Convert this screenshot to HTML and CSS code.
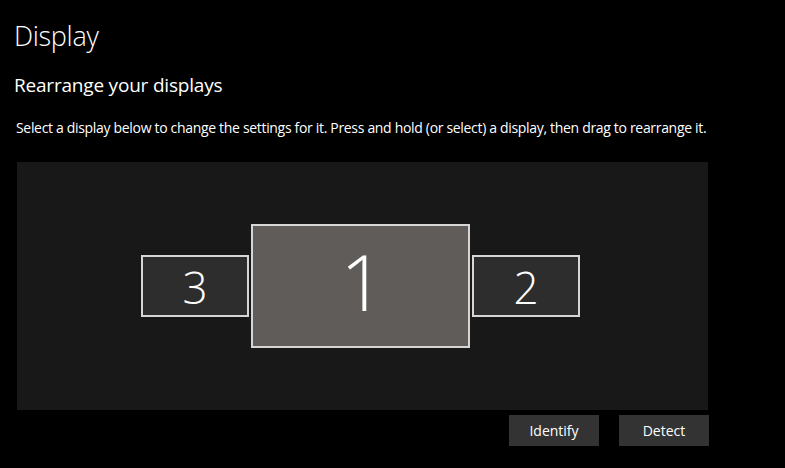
FILE: index.html
```html
<!DOCTYPE html>
<html>
<head>
<meta charset="utf-8">
<link rel="stylesheet" href="styles.css">
</head>
<body>
<div class="page">
  <h1 class="title">Display</h1>
  <h2 class="subtitle">Rearrange your displays</h2>
  <p class="hint">Select a display below to change the settings for it. Press and hold (or select) a display, then drag to rearrange it.</p>
  <div class="canvas">
    <div class="monitor small"><span>3</span></div>
    <div class="monitor main"><span>1</span></div>
    <div class="monitor small"><span>2</span></div>
  </div>
  <div class="actions">
    <button class="btn identify">Identify</button>
    <button class="btn detect">Detect</button>
  </div>
</div>
</body>
</html>
```
FILE: styles.css
```css
html, body {
  margin: 0;
  padding: 0;
  background: #000;
  width: 785px;
  height: 468px;
  overflow: hidden;
}
.page {
  font-family: "Open Sans", "Noto Sans", sans-serif;
  color: #fff;
  padding-top: 17.5px;
}
.title {
  margin: 0 0 0 14px;
  font-size: 27px;
  font-weight: 300;
  line-height: 36px;
  letter-spacing: -0.3px;
}
.subtitle {
  margin: 18px 0 0 14px;
  font-size: 19px;
  font-weight: 400;
  line-height: 26px;
  letter-spacing: -0.2px;
}
.hint {
  margin: 20px 0 0 16px;
  font-size: 14px;
  line-height: 20px;
  letter-spacing: -0.32px;
}
.canvas {
  margin: 24px 0 0 17px;
  width: 691px;
  height: 248px;
  background: #181818;
  display: flex;
  align-items: center;
  justify-content: center;
  gap: 2px;
  padding-right: 4px;
  box-sizing: border-box;
}
.monitor {
  box-sizing: border-box;
  border: 2px solid #d6d6d6;
  display: flex;
  align-items: center;
  justify-content: center;
  font-weight: 300;
  color: #fff;
}
.small {
  width: 108px;
  height: 62px;
  background: #2d2d2d;
  font-size: 44px;
}
.main {
  width: 219px;
  height: 124px;
  background: #5f5c59;
  font-size: 78px;
}
.monitor span {
  line-height: 1;
}
.small span {
  padding-top: 2px;
}
.main span {
  padding-bottom: 10px;
  padding-left: 4px;
}
.actions {
  margin: 5px 0 0 17px;
  width: 692px;
  display: flex;
  justify-content: flex-end;
  gap: 20px;
}
.btn {
  width: 90px;
  height: 31px;
  border: none;
  background: #333;
  color: #fff;
  font-family: "Open Sans", "Noto Sans", sans-serif;
  font-size: 14px;
  padding: 0;
}
```
